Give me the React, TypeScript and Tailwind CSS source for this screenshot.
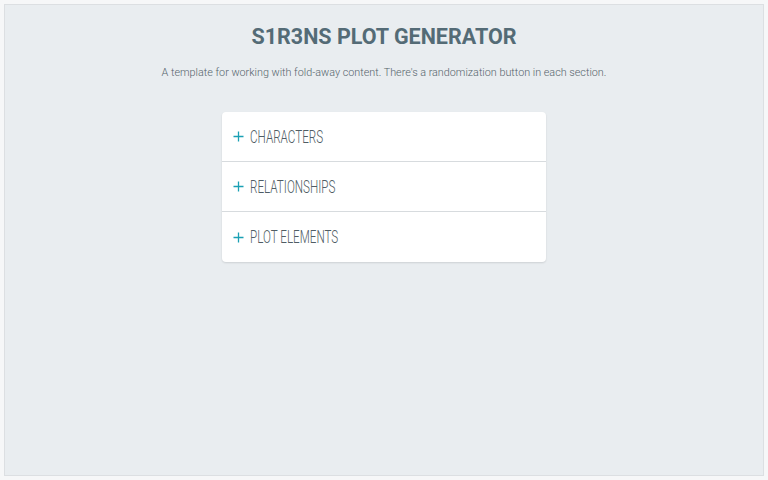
import React from "react";

const items = ["CHARACTERS", "RELATIONSHIPS", "PLOT ELEMENTS"];

export default function App() {
  return (
    <div className="w-[768px] h-[480px] bg-[#f6f7f8] p-[4px]">
      <div
        className="h-full border border-[#dcdfe2] bg-[#e9edf0] flex flex-col items-center"
        style={{ fontFamily: "Roboto, sans-serif" }}
      >
        <h1 className="mt-[17px] text-[21.5px] leading-[30px] font-bold text-[#546b76]">
          S1R3NS PLOT GENERATOR
        </h1>
        <p className="mt-[14px] text-[10.8px] leading-[14px] font-light text-[#55646c]">
          A template for working with fold-away content. There's a randomization button in each section.
        </p>
        <div className="mt-[32px] w-[324px] bg-white rounded-[4px] shadow-[0_1px_2px_rgba(0,0,0,0.12)]">
          {items.map((t, i) => (
            <div
              key={t}
              className={`h-[50px] flex items-center pl-[11px] ${i < items.length - 1 ? "border-b border-[#d7dbde]" : ""}`}
            >
              <svg width="11" height="11" viewBox="0 0 11 11" className="mr-[6px] shrink-0">
                <path d="M5.5 0.5V10.5M0.5 5.5H10.5" stroke="#1aa0b4" strokeWidth="1.3" />
              </svg>
              <span className="inline-block origin-left scale-x-[0.63] mt-[2px] text-[18.5px] font-light text-[#4f5c64] whitespace-nowrap">
                {t}
              </span>
            </div>
          ))}
        </div>
      </div>
    </div>
  );
}
